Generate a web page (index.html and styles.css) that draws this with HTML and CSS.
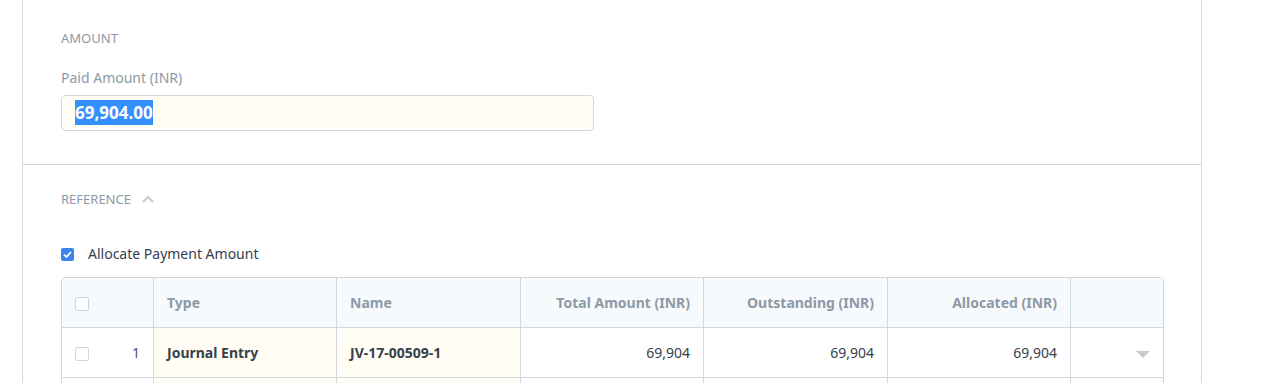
FILE: index.html
```html
<!DOCTYPE html>
<html>
<head>
    <meta charset="UTF-8">
    <title>Payment Entry</title>
    <link rel="stylesheet" href="styles.css">
</head>
<body>
<div class="formCard">
    <div class="formSection first">
        <div class="sectionHead">Amount</div>
        <div class="fieldLabel">Paid Amount (INR)</div>
        <div class="fieldInput"><span class="selected">69,904.00</span></div>
    </div>

    <div class="formSection">
        <div class="sectionHead">
            Reference
            <svg class="chevron" width="14" height="10" viewBox="0 0 14 10"><polyline points="2,8 7,3 12,8" fill="none" stroke="#c8cfd5" stroke-width="2.4"/></svg>
        </div>
        <label class="checkRow">
            <svg class="checkOn" width="13" height="13" viewBox="0 0 13 13"><rect x="0" y="0" width="13" height="13" rx="2" fill="#3a85ec"/><polyline points="3,6.6 5.5,9 10,4" fill="none" stroke="#fff" stroke-width="1.8"/></svg>
            <span>Allocate Payment Amount</span>
        </label>

        <table class="grid">
            <colgroup>
                <col style="width:92px">
                <col style="width:183px">
                <col style="width:184px">
                <col style="width:183px">
                <col style="width:184px">
                <col style="width:183px">
                <col style="width:92px">
            </colgroup>
            <thead>
            <tr>
                <th class="rowIdx"><span class="box"></span></th>
                <th>Type</th>
                <th>Name</th>
                <th class="num">Total Amount (INR)</th>
                <th class="num">Outstanding (INR)</th>
                <th class="num">Allocated (INR)</th>
                <th></th>
            </tr>
            </thead>
            <tbody>
            <tr>
                <td class="rowIdx"><span class="box"></span><span class="idx">1</span></td>
                <td class="edit bold">Journal Entry</td>
                <td class="edit bold">JV-17-00509-1</td>
                <td class="num">69,904</td>
                <td class="num">69,904</td>
                <td class="num">69,904</td>
                <td class="caretCell"><span class="caret"></span></td>
            </tr>
            <tr>
                <td class="rowIdx"></td>
                <td class="edit"></td>
                <td class="edit"></td>
                <td></td>
                <td></td>
                <td></td>
                <td></td>
            </tr>
            </tbody>
        </table>
    </div>
</div>
</body>
</html>
```

FILE: styles.css
```css
* {
    box-sizing: border-box;
}

body {
    margin: 0;
    font-family: "Noto Sans", "Open Sans", sans-serif;
    font-size: 14px;
    color: #36414c;
    background: #fff;
}

.formCard {
    margin-left: 22px;
    width: 1180px;
    min-height: 383px;
    border-left: 1px solid #d1d8dd;
    border-right: 1px solid #d1d8dd;
}

.formSection {
    padding: 25px 38px 0 38px;
    border-top: 1px solid #d1d8dd;
}

.formSection.first {
    padding-top: 29px;
    padding-bottom: 33px;
    border-top: none;
}

.sectionHead {
    display: flex;
    align-items: center;
    gap: 10px;
    font-size: 13px;
    line-height: 18px;
    color: #8d99a6;
    text-transform: uppercase;
}

.first .fieldLabel {
    margin-top: 21px;
}

.fieldLabel {
    margin-bottom: 7px;
    line-height: 20px;
    font-size: 14px;
    color: #8d99a6;
}

.fieldInput {
    width: 533px;
    height: 36px;
    padding: 0 13px;
    line-height: 34px;
    background: #fffdf4;
    border: 1px solid #d1d8dd;
    border-radius: 4px;
    font-weight: bold;
    font-size: 17px;
}

.fieldInput .selected {
    background: #3390ff;
    color: #fff;
    padding: 1px 0;
}

.checkRow {
    display: flex;
    align-items: center;
    gap: 14px;
    margin-top: 36px;
    line-height: 20px;
    font-size: 14px;
}

.grid {
    margin-top: 13px;
    width: 1102px;
    table-layout: fixed;
    border-collapse: separate;
    border-spacing: 0;
    border: 1px solid #d1d8dd;
    border-radius: 4px;
    font-size: 14px;
}

.grid th, .grid td {
    padding: 0 13px;
    text-align: left;
    border-right: 1px solid #d1d8dd;
    border-bottom: 1px solid #d1d8dd;
    white-space: nowrap;
}

.grid th:last-child, .grid td:last-child {
    border-right: none;
}

.grid th {
    height: 50px;
    background: #f7fafc;
    color: #8d99a6;
    font-weight: bold;
}

.grid thead tr th:first-child {
    border-top-left-radius: 4px;
}

.grid thead tr th:last-child {
    border-top-right-radius: 4px;
}

.grid td {
    height: 50px;
}

.grid .num {
    text-align: right;
}

.grid .bold {
    font-weight: bold;
}

.grid .edit {
    background: #fffdf4;
}

.rowIdx .box {
    display: inline-block;
    width: 14px;
    height: 14px;
    vertical-align: middle;
    border: 1px solid #d1d8dd;
    border-radius: 2px;
    background: #fff;
}

.rowIdx .idx {
    float: right;
    color: #5e4670;
}

.grid .caretCell {
    text-align: right;
}

.caret {
    display: inline-block;
    border-left: 7px solid transparent;
    border-right: 7px solid transparent;
    border-top: 7px solid #c8ccd0;
    vertical-align: middle;
}
```
